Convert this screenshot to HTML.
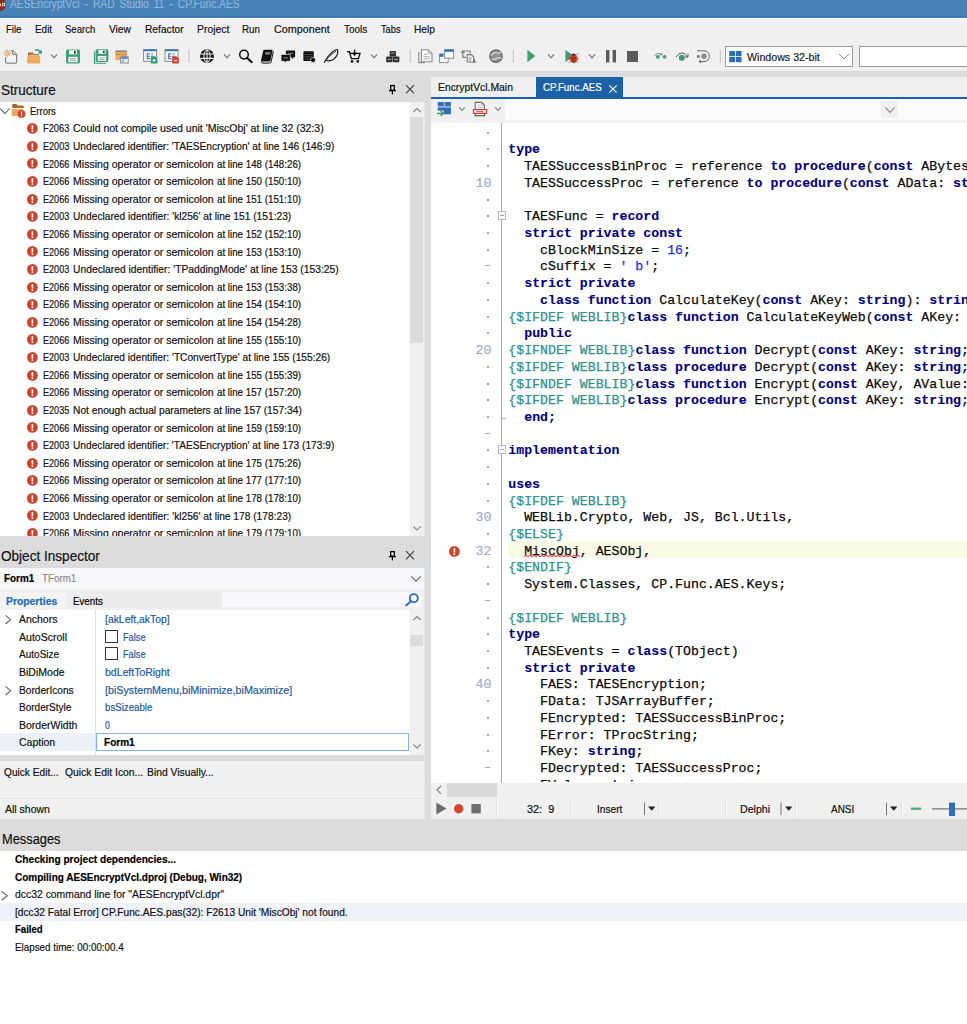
<!DOCTYPE html>
<html><head><meta charset="utf-8"><title>RAD Studio</title>
<style>
html,body{margin:0;padding:0;}
body{width:967px;height:1024px;overflow:hidden;position:relative;background:#dcdcdc;font-family:'Liberation Sans',sans-serif;}
.t{position:absolute;white-space:pre;line-height:20px;height:20px;-webkit-text-stroke:0.2px;}
.t b{-webkit-text-stroke:0.1px;}
svg{overflow:visible;display:block}
</style></head><body>
<div style="position:absolute;left:0px;top:0px;width:967px;height:17.8px;background:#4682b8;"></div>
<div style="position:absolute;left:0px;top:16.4px;width:967px;height:1.4px;background:#3c79b1;"></div>
<div class="t" style="left:10.3px;top:-6.33px;font-family:'Liberation Sans',sans-serif;font-size:12.2px;color:#8db4da;transform:scaleX(0.8403);transform-origin:0 0;word-spacing:2.6px;">AESEncryptVcl - RAD Studio 11 - CP.Func.AES</div>
<svg style="position:absolute;left:0px;top:0px;overflow:hidden" width="8" height="13" viewBox="0 0 8 13"><circle cx="-0.6" cy="4.6" r="6.6" fill="#8a2a1e"/><rect x="2.2" y="2.8" width="3" height="3.4" fill="#f4e8e4"/><rect x="3.1" y="3.7" width="1.2" height="1.6" fill="#8a2a1e"/><rect x="-1" y="3.6" width="2" height="2.6" fill="#e8d4d0"/></svg>
<div style="position:absolute;left:0px;top:17.8px;width:967px;height:52.9px;background:#f0f0f0;"></div>
<div style="position:absolute;left:0px;top:17.8px;width:967px;height:1.4px;background:#fcfcfc;"></div>
<div class="t" style="left:5.5px;top:19.38px;font-family:'Liberation Sans',sans-serif;font-size:11.6px;color:#111;transform:scaleX(0.8241);transform-origin:0 0;">File</div>
<div class="t" style="left:34.5px;top:19.38px;font-family:'Liberation Sans',sans-serif;font-size:11.6px;color:#111;transform:scaleX(0.8557);transform-origin:0 0;">Edit</div>
<div class="t" style="left:65.4px;top:19.38px;font-family:'Liberation Sans',sans-serif;font-size:11.6px;color:#111;transform:scaleX(0.8221);transform-origin:0 0;">Search</div>
<div class="t" style="left:108.9px;top:19.38px;font-family:'Liberation Sans',sans-serif;font-size:11.6px;color:#111;transform:scaleX(0.8787);transform-origin:0 0;">View</div>
<div class="t" style="left:144.6px;top:19.38px;font-family:'Liberation Sans',sans-serif;font-size:11.6px;color:#111;transform:scaleX(0.8807);transform-origin:0 0;">Refactor</div>
<div class="t" style="left:196.5px;top:19.38px;font-family:'Liberation Sans',sans-serif;font-size:11.6px;color:#111;transform:scaleX(0.8949);transform-origin:0 0;">Project</div>
<div class="t" style="left:242.4px;top:19.38px;font-family:'Liberation Sans',sans-serif;font-size:11.6px;color:#111;transform:scaleX(0.8458);transform-origin:0 0;">Run</div>
<div class="t" style="left:274.2px;top:19.38px;font-family:'Liberation Sans',sans-serif;font-size:11.6px;color:#111;transform:scaleX(0.9291);transform-origin:0 0;">Component</div>
<div class="t" style="left:343.7px;top:19.38px;font-family:'Liberation Sans',sans-serif;font-size:11.6px;color:#111;transform:scaleX(0.8605);transform-origin:0 0;">Tools</div>
<div class="t" style="left:380.8px;top:19.38px;font-family:'Liberation Sans',sans-serif;font-size:11.6px;color:#111;transform:scaleX(0.7959);transform-origin:0 0;">Tabs</div>
<div class="t" style="left:414.1px;top:19.38px;font-family:'Liberation Sans',sans-serif;font-size:11.6px;color:#111;transform:scaleX(0.876);transform-origin:0 0;">Help</div>
<svg style="position:absolute;left:0px;top:44px;" width="967" height="26" viewBox="0 44 967 26"><path d="M5.6 57 V62 q0 1.2 1.2 1.2 H15.4 q1.2 0 1.2 -1.2 V54.6 L12.8 50.6 H11" fill="#f6f6f6" stroke="#858585" stroke-width="1.2"/><path d="M12.6 50.8 V54.6 H16.4" fill="#d8d8d8" stroke="#858585" stroke-width="1"/><path d="M7.4 53.3 L11.30 53.30 M7.4 53.3 L10.16 56.06 M7.4 53.3 L7.40 57.20 M7.4 53.3 L4.64 56.06 M7.4 53.3 L3.50 53.30 M7.4 53.3 L4.64 50.54 M7.4 53.3 L7.40 49.40 M7.4 53.3 L10.16 50.54 " stroke="#f0a550" stroke-width="1.1" fill="none"/><circle cx="7.4" cy="53.3" r="1.6" fill="#f4b46a"/><circle cx="7.4" cy="53.3" r="0.6" fill="#fff"/><path d="M28 53.2 q0 -0.6 0.6 -0.6 H32.6 L34 54 H38 q0.6 0 0.6 0.6 V57 H28 Z" fill="#a9692e"/><rect x="27.2" y="56" width="13" height="7.4" rx="0.8" fill="#ebaa5c"/><rect x="28.6" y="54.8" width="9.6" height="1.2" fill="#d8c0a0"/><path d="M35 50 H38.4 L41 52.8 M41.2 50.2 V53 H38.4" fill="none" stroke="#2e9e78" stroke-width="1.3"/><path d="M51 54.4 l3.0 3.4 l3.0 -3.4" fill="none" stroke="#777" stroke-width="1.2"/><rect x="66" y="49.4" width="14" height="14" rx="1.6" fill="#3d9e78"/><rect x="69.0" y="50.199999999999996" width="8.0" height="4.2" fill="#eef5f1"/><rect x="74.0" y="51.0" width="1.8" height="2.6" fill="#3a3a3a"/><rect x="68.4" y="56.8" width="9.2" height="5.4" fill="#f4f7f5"/><rect x="70.0" y="58.4" width="6.0" height="0.9" fill="#9a9a9a"/><rect x="70.0" y="60.2" width="6.0" height="0.9" fill="#9a9a9a"/><path d="M94.4 51.5 V63.2 H106" fill="none" stroke="#3d9e78" stroke-width="1.1"/><rect x="95.6" y="49.2" width="12.8" height="12.8" rx="1.462857142857143" fill="#3d9e78"/><rect x="98.34285714285714" y="49.931428571428576" width="7.314285714285715" height="3.8400000000000003" fill="#eef5f1"/><rect x="102.91428571428571" y="50.66285714285715" width="1.645714285714286" height="2.3771428571428572" fill="#3a3a3a"/><rect x="97.7942857142857" y="55.96571428571429" width="8.411428571428571" height="4.937142857142858" fill="#f4f7f5"/><rect x="99.25714285714285" y="57.42857142857143" width="5.485714285714286" height="0.822857142857143" fill="#9a9a9a"/><rect x="99.25714285714285" y="59.07428571428572" width="5.485714285714286" height="0.822857142857143" fill="#9a9a9a"/><rect x="115.4" y="50.4" width="11.6" height="2.6" fill="#8a8a8a"/><rect x="115.4" y="52.2" width="11.6" height="8" fill="#ebaa5c"/><rect x="115.4" y="54" width="11.6" height="0.9" fill="#c98a45"/><rect x="120.6" y="56.6" width="7.6" height="6.4" fill="#f2f2f2" stroke="#8a8a8a" stroke-width="1"/><rect x="121.2" y="57.2" width="6.4" height="1.6" fill="#3b78c0"/><rect x="122" y="59.6" width="2.2" height="2.6" fill="#8ab0dc"/><rect x="143.6" y="49.8" width="13" height="11.6" fill="#fafafa" stroke="#8a8a8a" stroke-width="1"/><rect x="143.6" y="49.4" width="13" height="1.8" fill="#2f6fbe"/><path d="M146.79999999999998 53.8 H150.0 M146.79999999999998 56.2 H150.0 M146.79999999999998 58.6 H150.0 M147.2 53.8 V58.6" stroke="#3b78c0" stroke-width="1.1" fill="none"/><path d="M151.2 54 H153.2 M151.2 56.2 H153.2" stroke="#3b78c0" stroke-width="1" fill="none"/><path d="M150.79999999999998 56.2 H155.0 L157.4 58.4 V63.4 H150.79999999999998 Z" fill="#2e9e78"/><path d="M152.6 60.4 H155.6 M154.1 58.9 V61.9" stroke="#fff" stroke-width="1.2"/><rect x="165" y="49.8" width="13" height="11.6" fill="#fafafa" stroke="#8a8a8a" stroke-width="1"/><rect x="165" y="49.4" width="13" height="1.8" fill="#2f6fbe"/><path d="M168.2 53.8 H171.4 M168.2 56.2 H171.4 M168.2 58.6 H171.4 M168.6 53.8 V58.6" stroke="#3b78c0" stroke-width="1.1" fill="none"/><path d="M172.6 54 H174.6 M172.6 56.2 H174.6" stroke="#3b78c0" stroke-width="1" fill="none"/><path d="M172.2 56.2 H176.4 L178.8 58.4 V63.4 H172.2 Z" fill="#d0432c"/><path d="M174 60.6 H177" stroke="#fff" stroke-width="1.2"/><rect x="188.4" y="50.2" width="1.3" height="1.3" fill="#a6a6a6"/><rect x="188.4" y="52.800000000000004" width="1.3" height="1.3" fill="#a6a6a6"/><rect x="188.4" y="55.400000000000006" width="1.3" height="1.3" fill="#a6a6a6"/><rect x="188.4" y="58.0" width="1.3" height="1.3" fill="#a6a6a6"/><rect x="188.4" y="60.6" width="1.3" height="1.3" fill="#a6a6a6"/><circle cx="207" cy="56.2" r="6.9" fill="#111"/><ellipse cx="207" cy="56.2" rx="3.1" ry="6" fill="none" stroke="#f0f0f0" stroke-width="1.1"/><path d="M200.6 54 H213.4 M200.6 58.4 H213.4 M207 49.6 V62.8" stroke="#f0f0f0" stroke-width="1.1" fill="none"/><path d="M224 54.4 l3.0 3.4 l3.0 -3.4" fill="none" stroke="#777" stroke-width="1.2"/><circle cx="244" cy="54.6" r="4.3" fill="none" stroke="#111" stroke-width="1.5"/><path d="M247.2 58 L251.6 62" stroke="#111" stroke-width="2.3" stroke-linecap="round"/><path d="M264.4 49.8 H271.8 q1 0 0.8 1 L270.4 60.6 q-0.2 1 -1.2 1 H261.8 q-1 0 -0.8 -1 L263.2 50.8 q0.2 -1 1.2 -1 Z" fill="#111"/><path d="M261.2 61.8 q0.4 1.3 1.6 1.3 H269.8 q1 0 1.2 -1 L273.4 51.4" fill="none" stroke="#111" stroke-width="1"/><path d="M265.4 52.2 H270.6 L270.2 54.6 H265 Z" fill="#8c8c8c"/><path d="M286.6 50.4 H294.4 q0.7 0 0.7 0.7 V56.6 q0 0.7 -0.7 0.7 H293.2 V59 L291.2 57.4 H286.6 q-0.7 0 -0.7 -0.7 V51.1 q0 -0.7 0.7 -0.7 Z" fill="#111"/><path d="M281.8 54.4 H289.6 q0.7 0 0.7 0.7 V60.6 q0 0.7 -0.7 0.7 H286.2 L284.4 63.2 V61.3 H281.8 q-0.7 0 -0.7 -0.7 V55.1 q0 -0.7 0.7 -0.7 Z" fill="#111" stroke="#f0f0f0" stroke-width="0.7"/><path d="M283.2 57.9 H288 M288.6 53.4 H293.2" stroke="#9a9a9a" stroke-width="0.9"/><rect x="303.4" y="51.2" width="10.4" height="9.8" rx="0.8" fill="#111"/><path d="M304.6 54.6 H312.6 M304.6 56.8 H312.6 M304.6 59 H310" stroke="#666" stroke-width="0.7"/><circle cx="313" cy="60" r="2.5" fill="#111" stroke="#f0f0f0" stroke-width="0.6"/><path d="M324 62.8 C326 58.6 328.6 55 333 51.4 C335 50 337.2 49.4 337.6 49.8 C338.2 52 337.2 55.6 334.6 58.4 C332 60.8 328.6 61.2 326.2 60.4" fill="none" stroke="#111" stroke-width="1.1"/><path d="M326.4 60 C329 56.6 332 53.8 336 51.2" fill="none" stroke="#111" stroke-width="0.8"/><path d="M347 51.6 H349.4 L351.4 58.6 H358.4 L360 53.4 H350" fill="none" stroke="#111" stroke-width="1.4"/><path d="M354.6 49.6 V55 M352.6 52.8 L354.6 55 L356.6 52.8" fill="none" stroke="#111" stroke-width="1.3"/><circle cx="352" cy="61.4" r="1.3" fill="#111"/><circle cx="357.8" cy="61.4" r="1.3" fill="#111"/><path d="M371 54.4 l3.0 3.4 l3.0 -3.4" fill="none" stroke="#777" stroke-width="1.2"/><rect x="389.6" y="51" width="6.4" height="5.6" rx="0.6" fill="#333"/><rect x="386.2" y="56.4" width="6.4" height="5.8" rx="0.6" fill="#333"/><rect x="393" y="56.4" width="6.4" height="5.8" rx="0.6" fill="#333"/><path d="M391 53 H394.6 M387.6 59.4 H391.2 M394.4 59.4 H398" stroke="#aaa" stroke-width="1"/><rect x="409.7" y="50.2" width="1.3" height="1.3" fill="#a6a6a6"/><rect x="409.7" y="52.800000000000004" width="1.3" height="1.3" fill="#a6a6a6"/><rect x="409.7" y="55.400000000000006" width="1.3" height="1.3" fill="#a6a6a6"/><rect x="409.7" y="58.0" width="1.3" height="1.3" fill="#a6a6a6"/><rect x="409.7" y="60.6" width="1.3" height="1.3" fill="#a6a6a6"/><path d="M418.8 52 V62.6 H425" fill="none" stroke="#8a8a8a" stroke-width="1.1"/><path d="M421.4 49.8 H428.4 L432 53.4 V61.8 H421.4 Z" fill="#f8f8f8" stroke="#8a8a8a" stroke-width="1.1"/><path d="M428.2 50 V53.6 H431.8 M423.6 54.4 H427 M423.6 56.6 H429.8 M423.6 58.8 H429.8" fill="none" stroke="#a8a8a8" stroke-width="0.9"/><rect x="439.6" y="54" width="8.6" height="8.6" fill="#fafafa" stroke="#8a8a8a" stroke-width="1"/><rect x="439.6" y="54" width="3.8" height="2.8" fill="#2f6fbe"/><rect x="444.6" y="49.8" width="9" height="8.4" fill="#fdfdfd" stroke="#8a8a8a" stroke-width="1"/><rect x="444.6" y="49.4" width="9" height="2.4" fill="#2f6fbe"/><path d="M462.8 57.4 V51.8 q0 -0.8 0.8 -0.8 H469.4 q0.8 0 0.8 0.8 V53.4" fill="none" stroke="#777" stroke-width="1.2"/><path d="M461 53 L462.8 50.8 L464.6 53" fill="none" stroke="#777" stroke-width="1.1"/><path d="M462.8 57.4 H466" fill="none" stroke="#777" stroke-width="1.2"/><path d="M467.2 54.6 H471.4 L473.6 56.8 V62 H467.2 Z" fill="#f4f4f4" stroke="#777" stroke-width="1.1"/><path d="M468.8 58 H471.6 M468.8 60 H471 M474.6 59 V62.6 M473 61.2 L474.6 63 L476 61.2" fill="none" stroke="#777" stroke-width="0.9"/><circle cx="496" cy="56.2" r="6.3" fill="#8f8f8f" stroke="#666" stroke-width="1.2"/><path d="M491 55.6 q3 -4 6 -2.6 q2.4 1 4.6 -1.6 M491.6 59 q3 0.8 5 -0.6 q2.6 -1.6 4.8 0.2" fill="none" stroke="#ddd" stroke-width="1.2"/><rect x="512.6999999999999" y="50.2" width="1.3" height="1.3" fill="#a6a6a6"/><rect x="512.6999999999999" y="52.800000000000004" width="1.3" height="1.3" fill="#a6a6a6"/><rect x="512.6999999999999" y="55.400000000000006" width="1.3" height="1.3" fill="#a6a6a6"/><rect x="512.6999999999999" y="58.0" width="1.3" height="1.3" fill="#a6a6a6"/><rect x="512.6999999999999" y="60.6" width="1.3" height="1.3" fill="#a6a6a6"/><path d="M527.4 49.8 L535.4 56 L527.4 62.2 Z" fill="#3d9e78"/><path d="M548 54.4 l3.0 3.4 l3.0 -3.4" fill="none" stroke="#777" stroke-width="1.2"/><path d="M565.4 49.8 L573.4 56 L565.4 62.2 Z" fill="#3d9e78"/><path d="M570.4 54.6 L569.2 53.4 M576.8 54.6 L578 53.4 M569.4 58.8 H568.4 M577.8 58.8 H578.8 M570 61.6 L569 62.6 M577.2 61.6 L578.2 62.6" stroke="#222" stroke-width="0.8"/><ellipse cx="573.6" cy="58.6" rx="4" ry="4.3" fill="#d9432b"/><path d="M571 55.2 q2.6 -3.4 5.2 0 Z" fill="#222"/><path d="M573.6 55 V62.8" stroke="#7a1f12" stroke-width="0.6"/><circle cx="572" cy="58.2" r="0.8" fill="#222"/><circle cx="575.2" cy="58.2" r="0.8" fill="#222"/><circle cx="572.2" cy="60.8" r="0.6" fill="#222"/><circle cx="575" cy="60.8" r="0.6" fill="#222"/><path d="M589 54.4 l3.0 3.4 l3.0 -3.4" fill="none" stroke="#777" stroke-width="1.2"/><rect x="606" y="50" width="3.4" height="12.4" fill="#5a5a5a"/><rect x="612.6" y="50" width="3.4" height="12.4" fill="#5a5a5a"/><rect x="627" y="51" width="11" height="11" fill="#5a5a5a"/><circle cx="657.8" cy="56.8" r="1.9" fill="#3d9e78"/><circle cx="664.6" cy="56.8" r="1.9" fill="#3d9e78"/><path d="M654.4 56 Q657.6 51.6 661.6 54.6 M661.8 52.8 V55 H659.6" fill="none" stroke="#777" stroke-width="0.9"/><circle cx="681.8" cy="57.8" r="3" fill="#3d9e78"/><path d="M676 57 Q681.8 49 687.6 56.6 M688 54 V57 H685" fill="none" stroke="#555" stroke-width="1"/><circle cx="698.4" cy="56.4" r="1.7" fill="#8a8a8a"/><circle cx="704" cy="56.2" r="2.7" fill="#8a8a8a"/><path d="M697 50.8 H704 A5.4 5.4 0 0 1 704 61.6 H699.4 M701 60 L699 61.6 L701 63.2" fill="none" stroke="#555" stroke-width="0.9"/><rect x="719.6999999999999" y="50.2" width="1.3" height="1.3" fill="#a6a6a6"/><rect x="719.6999999999999" y="52.800000000000004" width="1.3" height="1.3" fill="#a6a6a6"/><rect x="719.6999999999999" y="55.400000000000006" width="1.3" height="1.3" fill="#a6a6a6"/><rect x="719.6999999999999" y="58.0" width="1.3" height="1.3" fill="#a6a6a6"/><rect x="719.6999999999999" y="60.6" width="1.3" height="1.3" fill="#a6a6a6"/></svg>
<div style="position:absolute;left:724.5px;top:46px;width:128px;height:20.8px;background:#fff;border:1px solid #9c9c9c;box-sizing:border-box"></div>
<svg style="position:absolute;left:0px;top:44px;" width="967" height="26" viewBox="0 44 967 26"><rect x="729.2" y="51" width="5.8" height="5.2" fill="#2f6eb5"/><rect x="735.8" y="51" width="5.8" height="5.2" fill="#2f6eb5"/><rect x="729.2" y="57" width="5.8" height="5.2" fill="#2f6eb5"/><rect x="735.8" y="57" width="5.8" height="5.2" fill="#2f6eb5"/><path d="M839 54 L844 59 L849 54" fill="none" stroke="#8a8a8a" stroke-width="1"/></svg>
<div class="t" style="left:746.6px;top:46.58px;font-family:'Liberation Sans',sans-serif;font-size:11.6px;color:#1a1a1a;transform:scaleX(0.9184);transform-origin:0 0;">Windows 32-bit</div>
<div style="position:absolute;left:859.4px;top:46px;width:120px;height:20.8px;background:#fff;border:1px solid #9c9c9c;box-sizing:border-box"></div>
<div class="t" style="left:1.2px;top:80.15px;font-family:'Liberation Sans',sans-serif;font-size:14px;color:#111;transform:scaleX(0.9628);transform-origin:0 0;">Structure</div>
<div style="position:absolute;left:0px;top:102px;width:409.6px;height:434.3px;background:#fff;"></div>
<div style="position:absolute;left:409.6px;top:102px;width:14.7px;height:434.3px;background:#f0f0f0;"></div>
<div style="position:absolute;left:410.2px;top:117px;width:12.7px;height:226px;background:#dcdcdc;"></div>
<div style="position:absolute;left:424.3px;top:102px;width:0.7px;height:434.3px;background:#e8e8e8;"></div>
<div style="position:absolute;left:424.3px;top:568px;width:0.7px;height:250.7px;background:#e8e8e8;"></div>
<svg style="position:absolute;left:0px;top:83.2px;" width="430" height="14" viewBox="0 83.2 430 14"><rect x="390.7" y="85.8" width="3.6" height="4.6" fill="#e8e8e8" stroke="#000" stroke-width="1.3"/><rect x="388.9" y="90.2" width="7" height="1.3" fill="#000"/><rect x="391.8" y="91.2" width="1.2" height="3.4" fill="#000"/><path d="M406 85.4 L414 93.60000000000001 M414 85.4 L406 93.60000000000001" stroke="#3a3a3a" stroke-width="1.1" fill="none"/></svg>
<svg style="position:absolute;left:413px;top:107.6px;" width="8" height="4.4" viewBox="0 0 8 4.4"><path d="M0.3 4 L4 0.5 L7.7 4" fill="none" stroke="#888" stroke-width="1.2"/></svg>
<svg style="position:absolute;left:413px;top:526.4px;" width="8" height="4.4" viewBox="0 0 8 4.4"><path d="M0.3 0.4 L4 3.9 L7.7 0.4" fill="none" stroke="#888" stroke-width="1.2"/></svg>
<div class="t" style="left:29.5px;top:100.68px;font-family:'Liberation Sans',sans-serif;font-size:11.3px;color:#111;transform:scaleX(0.8386);transform-origin:0 0;">Errors</div>
<svg style="position:absolute;left:0px;top:102px;" width="30" height="18" viewBox="0 102 30 18"><path d="M0.3 108.5 L4.9 113.6 L9.5 108.5" fill="none" stroke="#666" stroke-width="1.1"/><path d="M12.2 104.6 q0 -0.6 0.6 -0.6 H16.4 L17.8 105.6 H23.2 q0.6 0 0.6 0.6 V107.9 H12.2 Z" fill="#a9692e"/><rect x="11.6" y="108.9" width="11" height="7" rx="0.6" fill="#ebaa5c"/><circle cx="21.5" cy="113.9" r="3.9" fill="#d0432c"/><rect x="20.9" y="111.4" width="1.2" height="3.2" fill="#fff"/><rect x="20.9" y="115.4" width="1.2" height="1.1" fill="#fff"/></svg>
<div style="position:absolute;left:0;top:102px;width:410px;height:434.3px;overflow:hidden">
<div class="t" style="left:43.1px;top:16.48px;font-family:'Liberation Sans',sans-serif;font-size:11.3px;color:#111;transform:scaleX(0.8207);transform-origin:0 0;">F2063</div>
<div class="t" style="left:72.7px;top:16.48px;font-family:'Liberation Sans',sans-serif;font-size:11.3px;color:#111;transform:scaleX(0.9309);transform-origin:0 0;">Could not compile used unit 'MiscObj' at line 32 (32:3)</div>
<svg style="position:absolute;left:27.2px;top:21.10000000000001px;" width="10.8" height="10.8" viewBox="0 0 10.8 10.8"><circle cx="5.4" cy="5.4" r="5.4" fill="#c9452f"/><rect x="4.6" y="2.2" width="1.6" height="4.3" fill="#fff"/><rect x="4.6" y="7.4" width="1.6" height="1.5" fill="#fff"/></svg>
<div class="t" style="left:43.1px;top:34.08px;font-family:'Liberation Sans',sans-serif;font-size:11.3px;color:#111;transform:scaleX(0.805);transform-origin:0 0;">E2003</div>
<div class="t" style="left:72.7px;top:34.08px;font-family:'Liberation Sans',sans-serif;font-size:11.3px;color:#111;transform:scaleX(0.8996);transform-origin:0 0;">Undeclared identifier: 'TAESEncryption' at line 146 (146:9)</div>
<svg style="position:absolute;left:27.2px;top:38.7px;" width="10.8" height="10.8" viewBox="0 0 10.8 10.8"><circle cx="5.4" cy="5.4" r="5.4" fill="#c9452f"/><rect x="4.6" y="2.2" width="1.6" height="4.3" fill="#fff"/><rect x="4.6" y="7.4" width="1.6" height="1.5" fill="#fff"/></svg>
<div class="t" style="left:43.1px;top:51.68px;font-family:'Liberation Sans',sans-serif;font-size:11.3px;color:#111;transform:scaleX(0.805);transform-origin:0 0;">E2066</div>
<div class="t" style="left:72.7px;top:51.68px;font-family:'Liberation Sans',sans-serif;font-size:11.3px;color:#111;transform:scaleX(0.9336);transform-origin:0 0;">Missing operator or semicolon</div>
<div class="t" style="left:217.4px;top:51.68px;font-family:'Liberation Sans',sans-serif;font-size:11.3px;color:#111;transform:scaleX(0.8638);transform-origin:0 0;">at line 148 (148:26)</div>
<svg style="position:absolute;left:27.2px;top:56.300000000000026px;" width="10.8" height="10.8" viewBox="0 0 10.8 10.8"><circle cx="5.4" cy="5.4" r="5.4" fill="#c9452f"/><rect x="4.6" y="2.2" width="1.6" height="4.3" fill="#fff"/><rect x="4.6" y="7.4" width="1.6" height="1.5" fill="#fff"/></svg>
<div class="t" style="left:43.1px;top:69.28px;font-family:'Liberation Sans',sans-serif;font-size:11.3px;color:#111;transform:scaleX(0.805);transform-origin:0 0;">E2066</div>
<div class="t" style="left:72.7px;top:69.28px;font-family:'Liberation Sans',sans-serif;font-size:11.3px;color:#111;transform:scaleX(0.9336);transform-origin:0 0;">Missing operator or semicolon</div>
<div class="t" style="left:217.4px;top:69.28px;font-family:'Liberation Sans',sans-serif;font-size:11.3px;color:#111;transform:scaleX(0.8638);transform-origin:0 0;">at line 150 (150:10)</div>
<svg style="position:absolute;left:27.2px;top:73.9px;" width="10.8" height="10.8" viewBox="0 0 10.8 10.8"><circle cx="5.4" cy="5.4" r="5.4" fill="#c9452f"/><rect x="4.6" y="2.2" width="1.6" height="4.3" fill="#fff"/><rect x="4.6" y="7.4" width="1.6" height="1.5" fill="#fff"/></svg>
<div class="t" style="left:43.1px;top:86.88px;font-family:'Liberation Sans',sans-serif;font-size:11.3px;color:#111;transform:scaleX(0.805);transform-origin:0 0;">E2066</div>
<div class="t" style="left:72.7px;top:86.88px;font-family:'Liberation Sans',sans-serif;font-size:11.3px;color:#111;transform:scaleX(0.9336);transform-origin:0 0;">Missing operator or semicolon</div>
<div class="t" style="left:217.4px;top:86.88px;font-family:'Liberation Sans',sans-serif;font-size:11.3px;color:#111;transform:scaleX(0.8638);transform-origin:0 0;">at line 151 (151:10)</div>
<svg style="position:absolute;left:27.2px;top:91.5px;" width="10.8" height="10.8" viewBox="0 0 10.8 10.8"><circle cx="5.4" cy="5.4" r="5.4" fill="#c9452f"/><rect x="4.6" y="2.2" width="1.6" height="4.3" fill="#fff"/><rect x="4.6" y="7.4" width="1.6" height="1.5" fill="#fff"/></svg>
<div class="t" style="left:43.1px;top:104.48px;font-family:'Liberation Sans',sans-serif;font-size:11.3px;color:#111;transform:scaleX(0.805);transform-origin:0 0;">E2003</div>
<div class="t" style="left:72.7px;top:104.48px;font-family:'Liberation Sans',sans-serif;font-size:11.3px;color:#111;transform:scaleX(0.9028);transform-origin:0 0;">Undeclared identifier: 'kl256' at line 151 (151:23)</div>
<svg style="position:absolute;left:27.2px;top:109.1px;" width="10.8" height="10.8" viewBox="0 0 10.8 10.8"><circle cx="5.4" cy="5.4" r="5.4" fill="#c9452f"/><rect x="4.6" y="2.2" width="1.6" height="4.3" fill="#fff"/><rect x="4.6" y="7.4" width="1.6" height="1.5" fill="#fff"/></svg>
<div class="t" style="left:43.1px;top:122.08px;font-family:'Liberation Sans',sans-serif;font-size:11.3px;color:#111;transform:scaleX(0.805);transform-origin:0 0;">E2066</div>
<div class="t" style="left:72.7px;top:122.08px;font-family:'Liberation Sans',sans-serif;font-size:11.3px;color:#111;transform:scaleX(0.9336);transform-origin:0 0;">Missing operator or semicolon</div>
<div class="t" style="left:217.4px;top:122.08px;font-family:'Liberation Sans',sans-serif;font-size:11.3px;color:#111;transform:scaleX(0.8638);transform-origin:0 0;">at line 152 (152:10)</div>
<svg style="position:absolute;left:27.2px;top:126.69999999999999px;" width="10.8" height="10.8" viewBox="0 0 10.8 10.8"><circle cx="5.4" cy="5.4" r="5.4" fill="#c9452f"/><rect x="4.6" y="2.2" width="1.6" height="4.3" fill="#fff"/><rect x="4.6" y="7.4" width="1.6" height="1.5" fill="#fff"/></svg>
<div class="t" style="left:43.1px;top:139.68px;font-family:'Liberation Sans',sans-serif;font-size:11.3px;color:#111;transform:scaleX(0.805);transform-origin:0 0;">E2066</div>
<div class="t" style="left:72.7px;top:139.68px;font-family:'Liberation Sans',sans-serif;font-size:11.3px;color:#111;transform:scaleX(0.9336);transform-origin:0 0;">Missing operator or semicolon</div>
<div class="t" style="left:217.4px;top:139.68px;font-family:'Liberation Sans',sans-serif;font-size:11.3px;color:#111;transform:scaleX(0.8638);transform-origin:0 0;">at line 153 (153:10)</div>
<svg style="position:absolute;left:27.2px;top:144.3px;" width="10.8" height="10.8" viewBox="0 0 10.8 10.8"><circle cx="5.4" cy="5.4" r="5.4" fill="#c9452f"/><rect x="4.6" y="2.2" width="1.6" height="4.3" fill="#fff"/><rect x="4.6" y="7.4" width="1.6" height="1.5" fill="#fff"/></svg>
<div class="t" style="left:43.1px;top:157.28px;font-family:'Liberation Sans',sans-serif;font-size:11.3px;color:#111;transform:scaleX(0.805);transform-origin:0 0;">E2003</div>
<div class="t" style="left:72.7px;top:157.28px;font-family:'Liberation Sans',sans-serif;font-size:11.3px;color:#111;transform:scaleX(0.9121);transform-origin:0 0;">Undeclared identifier: 'TPaddingMode' at line 153 (153:25)</div>
<svg style="position:absolute;left:27.2px;top:161.90000000000003px;" width="10.8" height="10.8" viewBox="0 0 10.8 10.8"><circle cx="5.4" cy="5.4" r="5.4" fill="#c9452f"/><rect x="4.6" y="2.2" width="1.6" height="4.3" fill="#fff"/><rect x="4.6" y="7.4" width="1.6" height="1.5" fill="#fff"/></svg>
<div class="t" style="left:43.1px;top:174.88px;font-family:'Liberation Sans',sans-serif;font-size:11.3px;color:#111;transform:scaleX(0.805);transform-origin:0 0;">E2066</div>
<div class="t" style="left:72.7px;top:174.88px;font-family:'Liberation Sans',sans-serif;font-size:11.3px;color:#111;transform:scaleX(0.9336);transform-origin:0 0;">Missing operator or semicolon</div>
<div class="t" style="left:217.4px;top:174.88px;font-family:'Liberation Sans',sans-serif;font-size:11.3px;color:#111;transform:scaleX(0.8638);transform-origin:0 0;">at line 153 (153:38)</div>
<svg style="position:absolute;left:27.2px;top:179.5px;" width="10.8" height="10.8" viewBox="0 0 10.8 10.8"><circle cx="5.4" cy="5.4" r="5.4" fill="#c9452f"/><rect x="4.6" y="2.2" width="1.6" height="4.3" fill="#fff"/><rect x="4.6" y="7.4" width="1.6" height="1.5" fill="#fff"/></svg>
<div class="t" style="left:43.1px;top:192.48px;font-family:'Liberation Sans',sans-serif;font-size:11.3px;color:#111;transform:scaleX(0.805);transform-origin:0 0;">E2066</div>
<div class="t" style="left:72.7px;top:192.48px;font-family:'Liberation Sans',sans-serif;font-size:11.3px;color:#111;transform:scaleX(0.9336);transform-origin:0 0;">Missing operator or semicolon</div>
<div class="t" style="left:217.4px;top:192.48px;font-family:'Liberation Sans',sans-serif;font-size:11.3px;color:#111;transform:scaleX(0.8638);transform-origin:0 0;">at line 154 (154:10)</div>
<svg style="position:absolute;left:27.2px;top:197.09999999999997px;" width="10.8" height="10.8" viewBox="0 0 10.8 10.8"><circle cx="5.4" cy="5.4" r="5.4" fill="#c9452f"/><rect x="4.6" y="2.2" width="1.6" height="4.3" fill="#fff"/><rect x="4.6" y="7.4" width="1.6" height="1.5" fill="#fff"/></svg>
<div class="t" style="left:43.1px;top:210.08px;font-family:'Liberation Sans',sans-serif;font-size:11.3px;color:#111;transform:scaleX(0.805);transform-origin:0 0;">E2066</div>
<div class="t" style="left:72.7px;top:210.08px;font-family:'Liberation Sans',sans-serif;font-size:11.3px;color:#111;transform:scaleX(0.9336);transform-origin:0 0;">Missing operator or semicolon</div>
<div class="t" style="left:217.4px;top:210.08px;font-family:'Liberation Sans',sans-serif;font-size:11.3px;color:#111;transform:scaleX(0.8638);transform-origin:0 0;">at line 154 (154:28)</div>
<svg style="position:absolute;left:27.2px;top:214.7px;" width="10.8" height="10.8" viewBox="0 0 10.8 10.8"><circle cx="5.4" cy="5.4" r="5.4" fill="#c9452f"/><rect x="4.6" y="2.2" width="1.6" height="4.3" fill="#fff"/><rect x="4.6" y="7.4" width="1.6" height="1.5" fill="#fff"/></svg>
<div class="t" style="left:43.1px;top:227.68px;font-family:'Liberation Sans',sans-serif;font-size:11.3px;color:#111;transform:scaleX(0.805);transform-origin:0 0;">E2066</div>
<div class="t" style="left:72.7px;top:227.68px;font-family:'Liberation Sans',sans-serif;font-size:11.3px;color:#111;transform:scaleX(0.9336);transform-origin:0 0;">Missing operator or semicolon</div>
<div class="t" style="left:217.4px;top:227.68px;font-family:'Liberation Sans',sans-serif;font-size:11.3px;color:#111;transform:scaleX(0.8638);transform-origin:0 0;">at line 155 (155:10)</div>
<svg style="position:absolute;left:27.2px;top:232.3px;" width="10.8" height="10.8" viewBox="0 0 10.8 10.8"><circle cx="5.4" cy="5.4" r="5.4" fill="#c9452f"/><rect x="4.6" y="2.2" width="1.6" height="4.3" fill="#fff"/><rect x="4.6" y="7.4" width="1.6" height="1.5" fill="#fff"/></svg>
<div class="t" style="left:43.1px;top:245.28px;font-family:'Liberation Sans',sans-serif;font-size:11.3px;color:#111;transform:scaleX(0.805);transform-origin:0 0;">E2003</div>
<div class="t" style="left:72.7px;top:245.28px;font-family:'Liberation Sans',sans-serif;font-size:11.3px;color:#111;transform:scaleX(0.9004);transform-origin:0 0;">Undeclared identifier: 'TConvertType' at line 155 (155:26)</div>
<svg style="position:absolute;left:27.2px;top:249.90000000000003px;" width="10.8" height="10.8" viewBox="0 0 10.8 10.8"><circle cx="5.4" cy="5.4" r="5.4" fill="#c9452f"/><rect x="4.6" y="2.2" width="1.6" height="4.3" fill="#fff"/><rect x="4.6" y="7.4" width="1.6" height="1.5" fill="#fff"/></svg>
<div class="t" style="left:43.1px;top:262.88px;font-family:'Liberation Sans',sans-serif;font-size:11.3px;color:#111;transform:scaleX(0.805);transform-origin:0 0;">E2066</div>
<div class="t" style="left:72.7px;top:262.88px;font-family:'Liberation Sans',sans-serif;font-size:11.3px;color:#111;transform:scaleX(0.9336);transform-origin:0 0;">Missing operator or semicolon</div>
<div class="t" style="left:217.4px;top:262.88px;font-family:'Liberation Sans',sans-serif;font-size:11.3px;color:#111;transform:scaleX(0.8638);transform-origin:0 0;">at line 155 (155:39)</div>
<svg style="position:absolute;left:27.2px;top:267.5000000000001px;" width="10.8" height="10.8" viewBox="0 0 10.8 10.8"><circle cx="5.4" cy="5.4" r="5.4" fill="#c9452f"/><rect x="4.6" y="2.2" width="1.6" height="4.3" fill="#fff"/><rect x="4.6" y="7.4" width="1.6" height="1.5" fill="#fff"/></svg>
<div class="t" style="left:43.1px;top:280.48px;font-family:'Liberation Sans',sans-serif;font-size:11.3px;color:#111;transform:scaleX(0.805);transform-origin:0 0;">E2066</div>
<div class="t" style="left:72.7px;top:280.48px;font-family:'Liberation Sans',sans-serif;font-size:11.3px;color:#111;transform:scaleX(0.9336);transform-origin:0 0;">Missing operator or semicolon</div>
<div class="t" style="left:217.4px;top:280.48px;font-family:'Liberation Sans',sans-serif;font-size:11.3px;color:#111;transform:scaleX(0.8638);transform-origin:0 0;">at line 157 (157:20)</div>
<svg style="position:absolute;left:27.2px;top:285.1px;" width="10.8" height="10.8" viewBox="0 0 10.8 10.8"><circle cx="5.4" cy="5.4" r="5.4" fill="#c9452f"/><rect x="4.6" y="2.2" width="1.6" height="4.3" fill="#fff"/><rect x="4.6" y="7.4" width="1.6" height="1.5" fill="#fff"/></svg>
<div class="t" style="left:43.1px;top:298.08px;font-family:'Liberation Sans',sans-serif;font-size:11.3px;color:#111;transform:scaleX(0.805);transform-origin:0 0;">E2035</div>
<div class="t" style="left:72.7px;top:298.08px;font-family:'Liberation Sans',sans-serif;font-size:11.3px;color:#111;transform:scaleX(0.9063);transform-origin:0 0;">Not enough actual parameters at line 157 (157:34)</div>
<svg style="position:absolute;left:27.2px;top:302.70000000000005px;" width="10.8" height="10.8" viewBox="0 0 10.8 10.8"><circle cx="5.4" cy="5.4" r="5.4" fill="#c9452f"/><rect x="4.6" y="2.2" width="1.6" height="4.3" fill="#fff"/><rect x="4.6" y="7.4" width="1.6" height="1.5" fill="#fff"/></svg>
<div class="t" style="left:43.1px;top:315.68px;font-family:'Liberation Sans',sans-serif;font-size:11.3px;color:#111;transform:scaleX(0.805);transform-origin:0 0;">E2066</div>
<div class="t" style="left:72.7px;top:315.68px;font-family:'Liberation Sans',sans-serif;font-size:11.3px;color:#111;transform:scaleX(0.9336);transform-origin:0 0;">Missing operator or semicolon</div>
<div class="t" style="left:217.4px;top:315.68px;font-family:'Liberation Sans',sans-serif;font-size:11.3px;color:#111;transform:scaleX(0.8638);transform-origin:0 0;">at line 159 (159:10)</div>
<svg style="position:absolute;left:27.2px;top:320.30000000000007px;" width="10.8" height="10.8" viewBox="0 0 10.8 10.8"><circle cx="5.4" cy="5.4" r="5.4" fill="#c9452f"/><rect x="4.6" y="2.2" width="1.6" height="4.3" fill="#fff"/><rect x="4.6" y="7.4" width="1.6" height="1.5" fill="#fff"/></svg>
<div class="t" style="left:43.1px;top:333.28px;font-family:'Liberation Sans',sans-serif;font-size:11.3px;color:#111;transform:scaleX(0.805);transform-origin:0 0;">E2003</div>
<div class="t" style="left:72.7px;top:333.28px;font-family:'Liberation Sans',sans-serif;font-size:11.3px;color:#111;transform:scaleX(0.8996);transform-origin:0 0;">Undeclared identifier: 'TAESEncryption' at line 173 (173:9)</div>
<svg style="position:absolute;left:27.2px;top:337.9000000000001px;" width="10.8" height="10.8" viewBox="0 0 10.8 10.8"><circle cx="5.4" cy="5.4" r="5.4" fill="#c9452f"/><rect x="4.6" y="2.2" width="1.6" height="4.3" fill="#fff"/><rect x="4.6" y="7.4" width="1.6" height="1.5" fill="#fff"/></svg>
<div class="t" style="left:43.1px;top:350.88px;font-family:'Liberation Sans',sans-serif;font-size:11.3px;color:#111;transform:scaleX(0.805);transform-origin:0 0;">E2066</div>
<div class="t" style="left:72.7px;top:350.88px;font-family:'Liberation Sans',sans-serif;font-size:11.3px;color:#111;transform:scaleX(0.9336);transform-origin:0 0;">Missing operator or semicolon</div>
<div class="t" style="left:217.4px;top:350.88px;font-family:'Liberation Sans',sans-serif;font-size:11.3px;color:#111;transform:scaleX(0.8638);transform-origin:0 0;">at line 175 (175:26)</div>
<svg style="position:absolute;left:27.2px;top:355.5000000000001px;" width="10.8" height="10.8" viewBox="0 0 10.8 10.8"><circle cx="5.4" cy="5.4" r="5.4" fill="#c9452f"/><rect x="4.6" y="2.2" width="1.6" height="4.3" fill="#fff"/><rect x="4.6" y="7.4" width="1.6" height="1.5" fill="#fff"/></svg>
<div class="t" style="left:43.1px;top:368.48px;font-family:'Liberation Sans',sans-serif;font-size:11.3px;color:#111;transform:scaleX(0.805);transform-origin:0 0;">E2066</div>
<div class="t" style="left:72.7px;top:368.48px;font-family:'Liberation Sans',sans-serif;font-size:11.3px;color:#111;transform:scaleX(0.9336);transform-origin:0 0;">Missing operator or semicolon</div>
<div class="t" style="left:217.4px;top:368.48px;font-family:'Liberation Sans',sans-serif;font-size:11.3px;color:#111;transform:scaleX(0.8638);transform-origin:0 0;">at line 177 (177:10)</div>
<svg style="position:absolute;left:27.2px;top:373.1px;" width="10.8" height="10.8" viewBox="0 0 10.8 10.8"><circle cx="5.4" cy="5.4" r="5.4" fill="#c9452f"/><rect x="4.6" y="2.2" width="1.6" height="4.3" fill="#fff"/><rect x="4.6" y="7.4" width="1.6" height="1.5" fill="#fff"/></svg>
<div class="t" style="left:43.1px;top:386.08px;font-family:'Liberation Sans',sans-serif;font-size:11.3px;color:#111;transform:scaleX(0.805);transform-origin:0 0;">E2066</div>
<div class="t" style="left:72.7px;top:386.08px;font-family:'Liberation Sans',sans-serif;font-size:11.3px;color:#111;transform:scaleX(0.9336);transform-origin:0 0;">Missing operator or semicolon</div>
<div class="t" style="left:217.4px;top:386.08px;font-family:'Liberation Sans',sans-serif;font-size:11.3px;color:#111;transform:scaleX(0.8638);transform-origin:0 0;">at line 178 (178:10)</div>
<svg style="position:absolute;left:27.2px;top:390.70000000000005px;" width="10.8" height="10.8" viewBox="0 0 10.8 10.8"><circle cx="5.4" cy="5.4" r="5.4" fill="#c9452f"/><rect x="4.6" y="2.2" width="1.6" height="4.3" fill="#fff"/><rect x="4.6" y="7.4" width="1.6" height="1.5" fill="#fff"/></svg>
<div class="t" style="left:43.1px;top:403.68px;font-family:'Liberation Sans',sans-serif;font-size:11.3px;color:#111;transform:scaleX(0.805);transform-origin:0 0;">E2003</div>
<div class="t" style="left:72.7px;top:403.68px;font-family:'Liberation Sans',sans-serif;font-size:11.3px;color:#111;transform:scaleX(0.9028);transform-origin:0 0;">Undeclared identifier: 'kl256' at line 178 (178:23)</div>
<svg style="position:absolute;left:27.2px;top:408.30000000000007px;" width="10.8" height="10.8" viewBox="0 0 10.8 10.8"><circle cx="5.4" cy="5.4" r="5.4" fill="#c9452f"/><rect x="4.6" y="2.2" width="1.6" height="4.3" fill="#fff"/><rect x="4.6" y="7.4" width="1.6" height="1.5" fill="#fff"/></svg>
<div class="t" style="left:43.1px;top:421.28px;font-family:'Liberation Sans',sans-serif;font-size:11.3px;color:#111;transform:scaleX(0.805);transform-origin:0 0;">E2066</div>
<div class="t" style="left:72.7px;top:421.28px;font-family:'Liberation Sans',sans-serif;font-size:11.3px;color:#111;transform:scaleX(0.9336);transform-origin:0 0;">Missing operator or semicolon</div>
<div class="t" style="left:217.4px;top:421.28px;font-family:'Liberation Sans',sans-serif;font-size:11.3px;color:#111;transform:scaleX(0.8638);transform-origin:0 0;">at line 179 (179:10)</div>
<svg style="position:absolute;left:27.2px;top:425.9000000000001px;" width="10.8" height="10.8" viewBox="0 0 10.8 10.8"><circle cx="5.4" cy="5.4" r="5.4" fill="#c9452f"/><rect x="4.6" y="2.2" width="1.6" height="4.3" fill="#fff"/><rect x="4.6" y="7.4" width="1.6" height="1.5" fill="#fff"/></svg>
</div>
<div class="t" style="left:1.2px;top:545.75px;font-family:'Liberation Sans',sans-serif;font-size:14px;color:#111;transform:scaleX(0.9692);transform-origin:0 0;">Object Inspector</div>
<div style="position:absolute;left:0px;top:568px;width:424.3px;height:20.5px;background:#f7f8fc;"></div>
<div style="position:absolute;left:0px;top:588.5px;width:424.3px;height:21px;background:#f0f0f0;"></div>
<div class="t" style="left:4.4px;top:567.98px;font-family:'Liberation Sans',sans-serif;font-size:11.3px;color:#000;font-weight:bold;transform:scaleX(0.8775);transform-origin:0 0;">Form1</div>
<div class="t" style="left:42.2px;top:567.98px;font-family:'Liberation Sans',sans-serif;font-size:11.3px;color:#8a8a8a;transform:scaleX(0.8673);transform-origin:0 0;">TForm1</div>
<div style="position:absolute;left:0px;top:592.4px;width:67px;height:17.1px;background:#f4f4f4;"></div>
<div style="position:absolute;left:67px;top:592.4px;width:155px;height:15.5px;background:#ececec;"></div>
<div style="position:absolute;left:222px;top:592.4px;width:199px;height:14.2px;background:#f8f8fc;"></div>
<div class="t" style="left:6.2px;top:590.68px;font-family:'Liberation Sans',sans-serif;font-size:11.3px;color:#1c6ab8;font-weight:bold;transform:scaleX(0.9161);transform-origin:0 0;">Properties</div>
<div class="t" style="left:73.4px;top:590.68px;font-family:'Liberation Sans',sans-serif;font-size:11.3px;color:#000;transform:scaleX(0.8626);transform-origin:0 0;">Events</div>
<svg style="position:absolute;left:0px;top:549px;" width="430" height="14" viewBox="0 549 430 14"><rect x="390.7" y="551.6" width="3.6" height="4.6" fill="#e8e8e8" stroke="#000" stroke-width="1.3"/><rect x="388.9" y="556" width="7" height="1.3" fill="#000"/><rect x="391.8" y="557" width="1.2" height="3.4" fill="#000"/><path d="M406 551.2 L414 559.4 M414 551.2 L406 559.4" stroke="#3a3a3a" stroke-width="1.1" fill="none"/></svg>
<svg style="position:absolute;left:411px;top:576px;" width="10" height="6" viewBox="0 0 10 6"><path d="M0.3 0.4 L5 5.2 L9.7 0.4" fill="none" stroke="#666" stroke-width="1.1"/></svg>
<svg style="position:absolute;left:405px;top:593px;" width="14" height="14" viewBox="0 0 14 14"><circle cx="8.8" cy="5.2" r="4" fill="none" stroke="#2a6cb5" stroke-width="1.8"/><path d="M6 8 L1.2 12.4" stroke="#2a6cb5" stroke-width="2" stroke-linecap="round"/></svg>
<div style="position:absolute;left:0px;top:609.5px;width:409.6px;height:145.7px;background:#fff;"></div>
<div style="position:absolute;left:95.2px;top:609.5px;width:1px;height:145.7px;background:#e0e0e0;"></div>
<div style="position:absolute;left:409.6px;top:609.5px;width:14.7px;height:145.7px;background:#f0f0f0;"></div>
<div style="position:absolute;left:410.2px;top:634.6px;width:12.7px;height:11.6px;background:#dcdcdc;"></div>
<svg style="position:absolute;left:413px;top:615.6px;" width="8" height="4.4" viewBox="0 0 8 4.4"><path d="M0.3 4 L4 0.5 L7.7 4" fill="none" stroke="#888" stroke-width="1.2"/></svg>
<svg style="position:absolute;left:413px;top:743.6px;" width="8" height="4.4" viewBox="0 0 8 4.4"><path d="M0.3 0.4 L4 3.9 L7.7 0.4" fill="none" stroke="#888" stroke-width="1.2"/></svg>
<div class="t" style="left:18.7px;top:608.98px;font-family:'Liberation Sans',sans-serif;font-size:11.3px;color:#111;transform:scaleX(0.9263);transform-origin:0 0;">Anchors</div>
<svg style="position:absolute;left:4.9px;top:615.1px;" width="7" height="9.4" viewBox="0 0 7 9.4"><path d="M0.5 0.4 L5.6 4.7 L0.5 9" fill="none" stroke="#666" stroke-width="1.1"/></svg>
<div class="t" style="left:104.9px;top:608.98px;font-family:'Liberation Sans',sans-serif;font-size:11.3px;color:#22589f;transform:scaleX(0.9198);transform-origin:0 0;">[akLeft,akTop]</div>
<div class="t" style="left:18.7px;top:626.61px;font-family:'Liberation Sans',sans-serif;font-size:11.3px;color:#111;transform:scaleX(0.932);transform-origin:0 0;">AutoScroll</div>
<div style="position:absolute;left:104.5px;top:647.73px;width:0px;height:0px;background:none;"></div>
<div style="position:absolute;left:104.6px;top:629.6px;width:13px;height:13px;background:#fff;border:1.2px solid #333;box-sizing:border-box"></div>
<div class="t" style="left:122.7px;top:626.61px;font-family:'Liberation Sans',sans-serif;font-size:11.3px;color:#22589f;transform:scaleX(0.8145);transform-origin:0 0;">False</div>
<div class="t" style="left:18.7px;top:644.24px;font-family:'Liberation Sans',sans-serif;font-size:11.3px;color:#111;transform:scaleX(0.889);transform-origin:0 0;">AutoSize</div>
<div style="position:absolute;left:104.5px;top:665.36px;width:0px;height:0px;background:none;"></div>
<div style="position:absolute;left:104.6px;top:647.23px;width:13px;height:13px;background:#fff;border:1.2px solid #333;box-sizing:border-box"></div>
<div class="t" style="left:122.7px;top:644.24px;font-family:'Liberation Sans',sans-serif;font-size:11.3px;color:#22589f;transform:scaleX(0.8145);transform-origin:0 0;">False</div>
<div class="t" style="left:18.7px;top:661.87px;font-family:'Liberation Sans',sans-serif;font-size:11.3px;color:#111;transform:scaleX(0.9309);transform-origin:0 0;">BiDiMode</div>
<div class="t" style="left:104.9px;top:661.87px;font-family:'Liberation Sans',sans-serif;font-size:11.3px;color:#22589f;transform:scaleX(0.928);transform-origin:0 0;">bdLeftToRight</div>
<div class="t" style="left:18.7px;top:679.50px;font-family:'Liberation Sans',sans-serif;font-size:11.3px;color:#111;transform:scaleX(0.8979);transform-origin:0 0;">BorderIcons</div>
<svg style="position:absolute;left:4.9px;top:685.62px;" width="7" height="9.4" viewBox="0 0 7 9.4"><path d="M0.5 0.4 L5.6 4.7 L0.5 9" fill="none" stroke="#666" stroke-width="1.1"/></svg>
<div class="t" style="left:104.9px;top:679.50px;font-family:'Liberation Sans',sans-serif;font-size:11.3px;color:#22589f;transform:scaleX(0.9497);transform-origin:0 0;">[biSystemMenu,biMinimize,biMaximize]</div>
<div class="t" style="left:18.7px;top:697.13px;font-family:'Liberation Sans',sans-serif;font-size:11.3px;color:#111;transform:scaleX(0.8877);transform-origin:0 0;">BorderStyle</div>
<div class="t" style="left:104.9px;top:697.13px;font-family:'Liberation Sans',sans-serif;font-size:11.3px;color:#22589f;transform:scaleX(0.8577);transform-origin:0 0;">bsSizeable</div>
<div class="t" style="left:18.7px;top:714.76px;font-family:'Liberation Sans',sans-serif;font-size:11.3px;color:#111;transform:scaleX(0.93);transform-origin:0 0;">BorderWidth</div>
<div class="t" style="left:104.9px;top:714.76px;font-family:'Liberation Sans',sans-serif;font-size:11.3px;color:#22589f;transform:scaleX(0.7782);transform-origin:0 0;">0</div>
<div style="position:absolute;left:0px;top:733.2px;width:95.2px;height:17.6px;background:#ecf1f9;"></div>
<div style="position:absolute;left:95.6px;top:733.2px;width:313.6px;height:17.7px;background:#fff;border:1.1px solid #80b4e8;box-sizing:border-box"></div>
<div class="t" style="left:18.7px;top:732.39px;font-family:'Liberation Sans',sans-serif;font-size:11.3px;color:#111;transform:scaleX(0.9293);transform-origin:0 0;">Caption</div>
<div class="t" style="left:104px;top:732.39px;font-family:'Liberation Sans',sans-serif;font-size:11.3px;color:#000;font-weight:bold;transform:scaleX(0.889);transform-origin:0 0;">Form1</div>
<div style="position:absolute;left:0px;top:761.4px;width:424.3px;height:57.3px;background:#f0f0f0;"></div>
<div style="position:absolute;left:0px;top:797.6px;width:424.3px;height:1.6px;background:#e5e5e5;"></div>
<div class="t" style="left:4.4px;top:761.68px;font-family:'Liberation Sans',sans-serif;font-size:11.3px;color:#111;transform:scaleX(0.8981);transform-origin:0 0;">Quick Edit...</div>
<div class="t" style="left:64.5px;top:761.68px;font-family:'Liberation Sans',sans-serif;font-size:11.3px;color:#111;transform:scaleX(0.9158);transform-origin:0 0;">Quick Edit Icon...</div>
<div class="t" style="left:147.2px;top:761.68px;font-family:'Liberation Sans',sans-serif;font-size:11.3px;color:#111;transform:scaleX(0.9129);transform-origin:0 0;">Bind Visually...</div>
<div class="t" style="left:5.3px;top:799.08px;font-family:'Liberation Sans',sans-serif;font-size:11.3px;color:#111;transform:scaleX(0.9285);transform-origin:0 0;">All shown</div>
<div style="position:absolute;left:431px;top:77.2px;width:536px;height:19.4px;background:#f0f0f0;"></div>
<div class="t" style="left:438.3px;top:77.48px;font-family:'Liberation Sans',sans-serif;font-size:11.3px;color:#111;transform:scaleX(0.9176);transform-origin:0 0;">EncryptVcl.Main</div>
<div style="position:absolute;left:535.5px;top:77.2px;width:87.8px;height:20px;background:#1c60a8;"></div>
<div class="t" style="left:543px;top:77.48px;font-family:'Liberation Sans',sans-serif;font-size:11.3px;color:#fff;transform:scaleX(0.8588);transform-origin:0 0;">CP.Func.AES</div>
<div style="position:absolute;left:431px;top:96.5px;width:536px;height:2.1px;background:#1c60a8;"></div>
<svg style="position:absolute;left:609.2px;top:84.7px;" width="8" height="8" viewBox="0 0 8 8"><path d="M0.3 0.3 L7.7 7.7 M7.7 0.3 L0.3 7.7" stroke="#fff" stroke-width="1.1" fill="none"/></svg>
<div style="position:absolute;left:431px;top:98.6px;width:536px;height:21.4px;background:#fafbfd;"></div>
<div style="position:absolute;left:431px;top:120px;width:536px;height:2.6px;background:#f1f1f1;"></div>
<div style="position:absolute;left:431px;top:98.6px;width:74px;height:22.4px;background:#f0f0f0;"></div>
<div style="position:absolute;left:881px;top:100.5px;width:17px;height:17px;background:#f0f0f0;"></div>
<svg style="position:absolute;left:0px;top:98px;" width="967" height="24" viewBox="0 98 967 24"><rect x="437.8" y="102.1" width="13.1" height="12.1" fill="#8fb0dc"/><rect x="437.8" y="102.1" width="5.8" height="3.8" fill="#2f6eb5"/><rect x="445.1" y="102.1" width="5.8" height="3.8" fill="#2f6eb5"/><rect x="437.8" y="107.8" width="13.1" height="6.4" fill="#2f6eb5"/><rect x="436.6" y="110.6" width="7.2" height="5.4" fill="#f0f0f0"/><path d="M437 113.4 H443 M440.6 110.8 L443.4 113.4 L440.6 116" fill="none" stroke="#36a06c" stroke-width="1.5"/><path d="M459 107.2 l3 3.2 l3 -3.2 M495 107.2 l3 3.2 l3 -3.2" fill="none" stroke="#888" stroke-width="1.1"/><path d="M475.2 109.4 V102.4 H481.6 L484.4 105 V109.4" fill="#fafafa" stroke="#6a6a6a" stroke-width="1.1"/><path d="M481.4 102.6 V105.2 H484.2 M477.4 105 H479.6 M477.4 107 H482.4" fill="none" stroke="#aaa" stroke-width="0.8"/><rect x="473.4" y="109.6" width="13.2" height="3.8" rx="0.6" fill="#e6e8f2" stroke="#d8402e" stroke-width="1.2"/><path d="M476.4 111.5 H483.6" stroke="#8a8a8a" stroke-width="1"/><path d="M475.2 114 V115.8 H484.6 V114" fill="none" stroke="#4a4a4a" stroke-width="1.1"/><path d="M885.4 107.4 L890 112.4 L894.6 107.4" fill="none" stroke="#8a8a8a" stroke-width="1.1"/></svg>
<div style="position:absolute;left:431px;top:122.6px;width:536px;height:660.2px;background:#fff;"></div>
<div style="position:absolute;left:501px;top:122.6px;width:1px;height:660.2px;background:#a4a4d8;"></div>
<div style="position:absolute;left:431px;top:782.8px;width:536px;height:14.4px;background:#f0f0f0;"></div>
<div style="position:absolute;left:447px;top:783.2px;width:50px;height:13.4px;background:#dadada;"></div>
<svg style="position:absolute;left:436px;top:785px;" width="6" height="10" viewBox="0 0 6 10"><path d="M5 0.8 L1 4.8 L5 8.8" fill="none" stroke="#777" stroke-width="1.1"/></svg>
<div style="position:absolute;left:431px;top:797.2px;width:536px;height:21.6px;background:#f0f0f0;"></div>
<div style="position:absolute;left:496.5px;top:798.5px;width:1px;height:20.3px;background:#fafafa;"></div>
<div style="position:absolute;left:495.5px;top:798.5px;width:1px;height:20.3px;background:#e2e2e2;"></div>
<div style="position:absolute;left:571.0px;top:798.5px;width:1px;height:20.3px;background:#fafafa;"></div>
<div style="position:absolute;left:570.0px;top:798.5px;width:1px;height:20.3px;background:#e2e2e2;"></div>
<div style="position:absolute;left:659.1px;top:798.5px;width:1px;height:20.3px;background:#fafafa;"></div>
<div style="position:absolute;left:658.1px;top:798.5px;width:1px;height:20.3px;background:#e2e2e2;"></div>
<div style="position:absolute;left:726.0px;top:798.5px;width:1px;height:20.3px;background:#fafafa;"></div>
<div style="position:absolute;left:725.0px;top:798.5px;width:1px;height:20.3px;background:#e2e2e2;"></div>
<div style="position:absolute;left:795.8px;top:798.5px;width:1px;height:20.3px;background:#fafafa;"></div>
<div style="position:absolute;left:794.8px;top:798.5px;width:1px;height:20.3px;background:#e2e2e2;"></div>
<div style="position:absolute;left:902.1px;top:798.5px;width:1px;height:20.3px;background:#fafafa;"></div>
<div style="position:absolute;left:901.1px;top:798.5px;width:1px;height:20.3px;background:#e2e2e2;"></div>
<svg style="position:absolute;left:0px;top:797px;" width="967" height="22" viewBox="0 797 967 22"><path d="M436.4 802.6 L446.4 808.6 L436.4 814.6 Z" fill="#6e6e6e"/><circle cx="458.7" cy="808.8" r="4.7" fill="#d2452f"/><rect x="471.4" y="804" width="9.4" height="9.4" fill="#6e6e6e"/><path d="M648 806.4 h7.4 l-3.7 4.4 Z" fill="#222"/><rect x="644.0" y="802.6" width="1" height="12.4" fill="#777"/><path d="M785 806.4 h7.4 l-3.7 4.4 Z" fill="#222"/><rect x="780.5" y="802.6" width="1" height="12.4" fill="#777"/><path d="M890 806.4 h7.4 l-3.7 4.4 Z" fill="#222"/><rect x="886.0" y="802.6" width="1" height="12.4" fill="#777"/><rect x="911" y="807.6" width="10" height="2.2" fill="#48a57c"/><rect x="932" y="808.4" width="36" height="1" fill="#555"/><rect x="949" y="802.6" width="6" height="13.4" fill="#2f6eb5"/></svg>
<div class="t" style="left:527px;top:799.08px;font-family:'Liberation Sans',sans-serif;font-size:11.3px;color:#111;transform:scaleX(0.9623);transform-origin:0 0;">32:  9</div>
<div class="t" style="left:597px;top:799.08px;font-family:'Liberation Sans',sans-serif;font-size:11.3px;color:#111;transform:scaleX(0.8986);transform-origin:0 0;">Insert</div>
<div class="t" style="left:740.4px;top:799.08px;font-family:'Liberation Sans',sans-serif;font-size:11.3px;color:#111;transform:scaleX(0.9366);transform-origin:0 0;">Delphi</div>
<div class="t" style="left:831.4px;top:799.08px;font-family:'Liberation Sans',sans-serif;font-size:11.3px;color:#111;transform:scaleX(0.8796);transform-origin:0 0;">ANSI</div>
<div style="position:absolute;left:431px;top:122.6px;width:536px;height:659.9px;overflow:hidden">
<div style="position:absolute;left:77.19999999999999px;top:418.5999999999999px;width:470px;height:16.7px;background:#fafbe6;"></div>
<div style="position:absolute;left:55.5px;top:9.100000000000017px;width:2px;height:2px;background:#9ba3cf;"></div>
<div style="position:absolute;left:55.5px;top:25.100000000000016px;width:2px;height:2px;background:#9ba3cf;"></div>
<div class="t" style="left:77.30000000000001px;top:17.18px;font-family:'Liberation Mono',monospace;font-size:13.24px;color:#0a0a0a;-webkit-text-stroke:0.25px;"><b style="color:#000080">type</b></div>
<div style="position:absolute;left:55.5px;top:42.100000000000016px;width:2px;height:2px;background:#9ba3cf;"></div>
<div class="t" style="left:77.30000000000001px;top:34.18px;font-family:'Liberation Mono',monospace;font-size:13.24px;color:#0a0a0a;-webkit-text-stroke:0.25px;">  TAESSuccessBinProc = reference <b style="color:#000080">to</b> <b style="color:#000080">procedure</b>(<b style="color:#000080">const</b> ABytes: TBytes);</div>
<div class="t" style="left:44.53999999999998px;top:51.18px;font-family:'Liberation Mono',monospace;font-size:13.24px;color:#a3abd3;">10</div>
<div class="t" style="left:77.30000000000001px;top:51.18px;font-family:'Liberation Mono',monospace;font-size:13.24px;color:#0a0a0a;-webkit-text-stroke:0.25px;">  TAESSuccessProc = reference <b style="color:#000080">to</b> <b style="color:#000080">procedure</b>(<b style="color:#000080">const</b> AData: <b style="color:#000080">string</b>);</div>
<div style="position:absolute;left:55.5px;top:76.10000000000002px;width:2px;height:2px;background:#9ba3cf;"></div>
<div style="position:absolute;left:55.5px;top:92.10000000000002px;width:2px;height:2px;background:#9ba3cf;"></div>
<div class="t" style="left:77.30000000000001px;top:84.18px;font-family:'Liberation Mono',monospace;font-size:13.24px;color:#0a0a0a;-webkit-text-stroke:0.25px;">  TAESFunc = <b style="color:#000080">record</b></div>
<div style="position:absolute;left:55.5px;top:109.10000000000002px;width:2px;height:2px;background:#9ba3cf;"></div>
<div class="t" style="left:77.30000000000001px;top:101.18px;font-family:'Liberation Mono',monospace;font-size:13.24px;color:#0a0a0a;-webkit-text-stroke:0.25px;">  <b style="color:#000080">strict</b> <b style="color:#000080">private</b> <b style="color:#000080">const</b></div>
<div style="position:absolute;left:55.5px;top:126.10000000000002px;width:2px;height:2px;background:#9ba3cf;"></div>
<div class="t" style="left:77.30000000000001px;top:118.18px;font-family:'Liberation Mono',monospace;font-size:13.24px;color:#0a0a0a;-webkit-text-stroke:0.25px;">    cBlockMinSize = <span style="color:#1a30e0">16</span>;</div>
<div style="position:absolute;left:54px;top:142.4px;width:4.8px;height:1px;background:#a3abd3;"></div>
<div class="t" style="left:77.30000000000001px;top:134.18px;font-family:'Liberation Mono',monospace;font-size:13.24px;color:#0a0a0a;-webkit-text-stroke:0.25px;">    cSuffix = <span style="color:#1a30e0">' b'</span>;</div>
<div style="position:absolute;left:55.5px;top:159.10000000000002px;width:2px;height:2px;background:#9ba3cf;"></div>
<div class="t" style="left:77.30000000000001px;top:151.18px;font-family:'Liberation Mono',monospace;font-size:13.24px;color:#0a0a0a;-webkit-text-stroke:0.25px;">  <b style="color:#000080">strict</b> <b style="color:#000080">private</b></div>
<div style="position:absolute;left:55.5px;top:176.10000000000002px;width:2px;height:2px;background:#9ba3cf;"></div>
<div class="t" style="left:77.30000000000001px;top:168.18px;font-family:'Liberation Mono',monospace;font-size:13.24px;color:#0a0a0a;-webkit-text-stroke:0.25px;">    <b style="color:#000080">class</b> <b style="color:#000080">function</b> CalculateKey(<b style="color:#000080">const</b> AKey: <b style="color:#000080">string</b>): <b style="color:#000080">string</b>; static;</div>
<div style="position:absolute;left:55.5px;top:193.10000000000002px;width:2px;height:2px;background:#9ba3cf;"></div>
<div class="t" style="left:77.30000000000001px;top:185.18px;font-family:'Liberation Mono',monospace;font-size:13.24px;color:#0a0a0a;-webkit-text-stroke:0.25px;"><span style="color:#2b9292">{$IFDEF WEBLIB}</span><b style="color:#000080">class</b> <b style="color:#000080">function</b> CalculateKeyWeb(<b style="color:#000080">const</b> AKey: <b style="color:#000080">string</b>): TBytes;</div>
<div style="position:absolute;left:55.5px;top:209.10000000000002px;width:2px;height:2px;background:#9ba3cf;"></div>
<div class="t" style="left:77.30000000000001px;top:201.18px;font-family:'Liberation Mono',monospace;font-size:13.24px;color:#0a0a0a;-webkit-text-stroke:0.25px;">  <b style="color:#000080">public</b></div>
<div class="t" style="left:44.53999999999998px;top:218.18px;font-family:'Liberation Mono',monospace;font-size:13.24px;color:#a3abd3;">20</div>
<div class="t" style="left:77.30000000000001px;top:218.18px;font-family:'Liberation Mono',monospace;font-size:13.24px;color:#0a0a0a;-webkit-text-stroke:0.25px;"><span style="color:#2b9292">{$IFNDEF WEBLIB}</span><b style="color:#000080">class</b> <b style="color:#000080">function</b> Decrypt(<b style="color:#000080">const</b> AKey: <b style="color:#000080">string</b>; <b style="color:#000080">const</b> AValue</div>
<div style="position:absolute;left:55.5px;top:243.10000000000002px;width:2px;height:2px;background:#9ba3cf;"></div>
<div class="t" style="left:77.30000000000001px;top:235.18px;font-family:'Liberation Mono',monospace;font-size:13.24px;color:#0a0a0a;-webkit-text-stroke:0.25px;"><span style="color:#2b9292">{$IFDEF WEBLIB}</span><b style="color:#000080">class</b> <b style="color:#000080">procedure</b> Decrypt(<b style="color:#000080">const</b> AKey: <b style="color:#000080">string</b>; <b style="color:#000080">const</b> AValue</div>
<div style="position:absolute;left:55.5px;top:260.1px;width:2px;height:2px;background:#9ba3cf;"></div>
<div class="t" style="left:77.30000000000001px;top:252.18px;font-family:'Liberation Mono',monospace;font-size:13.24px;color:#0a0a0a;-webkit-text-stroke:0.25px;"><span style="color:#2b9292">{$IFNDEF WEBLIB}</span><b style="color:#000080">class</b> <b style="color:#000080">function</b> Encrypt(<b style="color:#000080">const</b> AKey, AValue: <b style="color:#000080">string</b>): <b style="color:#000080">string</b>;</div>
<div style="position:absolute;left:55.5px;top:276.1px;width:2px;height:2px;background:#9ba3cf;"></div>
<div class="t" style="left:77.30000000000001px;top:268.18px;font-family:'Liberation Mono',monospace;font-size:13.24px;color:#0a0a0a;-webkit-text-stroke:0.25px;"><span style="color:#2b9292">{$IFDEF WEBLIB}</span><b style="color:#000080">class</b> <b style="color:#000080">procedure</b> Encrypt(<b style="color:#000080">const</b> AKey: <b style="color:#000080">string</b>; <b style="color:#000080">const</b> AValue</div>
<div style="position:absolute;left:55.5px;top:293.1px;width:2px;height:2px;background:#9ba3cf;"></div>
<div class="t" style="left:77.30000000000001px;top:285.18px;font-family:'Liberation Mono',monospace;font-size:13.24px;color:#0a0a0a;-webkit-text-stroke:0.25px;">  <b style="color:#000080">end;</b></div>
<div style="position:absolute;left:54px;top:310.40000000000003px;width:4.8px;height:1px;background:#a3abd3;"></div>
<div style="position:absolute;left:55.5px;top:326.1px;width:2px;height:2px;background:#9ba3cf;"></div>
<div class="t" style="left:77.30000000000001px;top:318.18px;font-family:'Liberation Mono',monospace;font-size:13.24px;color:#0a0a0a;-webkit-text-stroke:0.25px;"><b style="color:#000080">implementation</b></div>
<div style="position:absolute;left:55.5px;top:343.1px;width:2px;height:2px;background:#9ba3cf;"></div>
<div style="position:absolute;left:55.5px;top:360.1px;width:2px;height:2px;background:#9ba3cf;"></div>
<div class="t" style="left:77.30000000000001px;top:352.18px;font-family:'Liberation Mono',monospace;font-size:13.24px;color:#0a0a0a;-webkit-text-stroke:0.25px;"><b style="color:#000080">uses</b></div>
<div style="position:absolute;left:55.5px;top:377.1px;width:2px;height:2px;background:#9ba3cf;"></div>
<div class="t" style="left:77.30000000000001px;top:369.18px;font-family:'Liberation Mono',monospace;font-size:13.24px;color:#0a0a0a;-webkit-text-stroke:0.25px;"><span style="color:#2b9292">{$IFDEF WEBLIB}</span></div>
<div class="t" style="left:44.53999999999998px;top:385.18px;font-family:'Liberation Mono',monospace;font-size:13.24px;color:#a3abd3;">30</div>
<div class="t" style="left:77.30000000000001px;top:385.18px;font-family:'Liberation Mono',monospace;font-size:13.24px;color:#0a0a0a;-webkit-text-stroke:0.25px;">  WEBLib.Crypto, Web, JS, Bcl.Utils,</div>
<div style="position:absolute;left:55.5px;top:410.0999999999999px;width:2px;height:2px;background:#9ba3cf;"></div>
<div class="t" style="left:77.30000000000001px;top:402.18px;font-family:'Liberation Mono',monospace;font-size:13.24px;color:#0a0a0a;-webkit-text-stroke:0.25px;"><span style="color:#2b9292">{$ELSE}</span></div>
<div class="t" style="left:44.53999999999998px;top:419.18px;font-family:'Liberation Mono',monospace;font-size:13.24px;color:#a3abd3;">32</div>
<div class="t" style="left:77.30000000000001px;top:419.18px;font-family:'Liberation Mono',monospace;font-size:13.24px;color:#0a0a0a;-webkit-text-stroke:0.25px;">  MiscObj, AESObj,</div>
<div style="position:absolute;left:55.5px;top:443.0999999999999px;width:2px;height:2px;background:#9ba3cf;"></div>
<div class="t" style="left:77.30000000000001px;top:435.18px;font-family:'Liberation Mono',monospace;font-size:13.24px;color:#0a0a0a;-webkit-text-stroke:0.25px;"><span style="color:#2b9292">{$ENDIF}</span></div>
<div style="position:absolute;left:55.5px;top:460.0999999999999px;width:2px;height:2px;background:#9ba3cf;"></div>
<div class="t" style="left:77.30000000000001px;top:452.18px;font-family:'Liberation Mono',monospace;font-size:13.24px;color:#0a0a0a;-webkit-text-stroke:0.25px;">  System.Classes, CP.Func.AES.Keys;</div>
<div style="position:absolute;left:54px;top:477.3999999999999px;width:4.8px;height:1px;background:#a3abd3;"></div>
<div style="position:absolute;left:55.5px;top:494.0999999999999px;width:2px;height:2px;background:#9ba3cf;"></div>
<div class="t" style="left:77.30000000000001px;top:486.18px;font-family:'Liberation Mono',monospace;font-size:13.24px;color:#0a0a0a;-webkit-text-stroke:0.25px;"><span style="color:#2b9292">{$IFDEF WEBLIB}</span></div>
<div style="position:absolute;left:55.5px;top:510.0999999999999px;width:2px;height:2px;background:#9ba3cf;"></div>
<div class="t" style="left:77.30000000000001px;top:502.18px;font-family:'Liberation Mono',monospace;font-size:13.24px;color:#0a0a0a;-webkit-text-stroke:0.25px;"><b style="color:#000080">type</b></div>
<div style="position:absolute;left:55.5px;top:527.0999999999999px;width:2px;height:2px;background:#9ba3cf;"></div>
<div class="t" style="left:77.30000000000001px;top:519.18px;font-family:'Liberation Mono',monospace;font-size:13.24px;color:#0a0a0a;-webkit-text-stroke:0.25px;">  TAESEvents = <b style="color:#000080">class</b>(TObject)</div>
<div style="position:absolute;left:55.5px;top:544.0999999999999px;width:2px;height:2px;background:#9ba3cf;"></div>
<div class="t" style="left:77.30000000000001px;top:536.18px;font-family:'Liberation Mono',monospace;font-size:13.24px;color:#0a0a0a;-webkit-text-stroke:0.25px;">  <b style="color:#000080">strict</b> <b style="color:#000080">private</b></div>
<div class="t" style="left:44.53999999999998px;top:552.18px;font-family:'Liberation Mono',monospace;font-size:13.24px;color:#a3abd3;">40</div>
<div class="t" style="left:77.30000000000001px;top:552.18px;font-family:'Liberation Mono',monospace;font-size:13.24px;color:#0a0a0a;-webkit-text-stroke:0.25px;">    FAES: TAESEncryption;</div>
<div style="position:absolute;left:55.5px;top:577.0999999999999px;width:2px;height:2px;background:#9ba3cf;"></div>
<div class="t" style="left:77.30000000000001px;top:569.18px;font-family:'Liberation Mono',monospace;font-size:13.24px;color:#0a0a0a;-webkit-text-stroke:0.25px;">    FData: TJSArrayBuffer;</div>
<div style="position:absolute;left:55.5px;top:594.0999999999999px;width:2px;height:2px;background:#9ba3cf;"></div>
<div class="t" style="left:77.30000000000001px;top:586.18px;font-family:'Liberation Mono',monospace;font-size:13.24px;color:#0a0a0a;-webkit-text-stroke:0.25px;">    FEncrypted: TAESSuccessBinProc;</div>
<div style="position:absolute;left:55.5px;top:611.0999999999999px;width:2px;height:2px;background:#9ba3cf;"></div>
<div class="t" style="left:77.30000000000001px;top:603.18px;font-family:'Liberation Mono',monospace;font-size:13.24px;color:#0a0a0a;-webkit-text-stroke:0.25px;">    FError: TProcString;</div>
<div style="position:absolute;left:55.5px;top:627.0999999999999px;width:2px;height:2px;background:#9ba3cf;"></div>
<div class="t" style="left:77.30000000000001px;top:619.18px;font-family:'Liberation Mono',monospace;font-size:13.24px;color:#0a0a0a;-webkit-text-stroke:0.25px;">    FKey: <b style="color:#000080">string</b>;</div>
<div style="position:absolute;left:54px;top:644.4px;width:4.8px;height:1px;background:#a3abd3;"></div>
<div class="t" style="left:77.30000000000001px;top:636.18px;font-family:'Liberation Mono',monospace;font-size:13.24px;color:#0a0a0a;-webkit-text-stroke:0.25px;">    FDecrypted: TAESSuccessProc;</div>
<div style="position:absolute;left:55.5px;top:661.0999999999999px;width:2px;height:2px;background:#9ba3cf;"></div>
<div class="t" style="left:77.30000000000001px;top:653.18px;font-family:'Liberation Mono',monospace;font-size:13.24px;color:#0a0a0a;-webkit-text-stroke:0.25px;">    FValue: <b style="color:#000080">string</b>;</div>
<div style="position:absolute;left:66.5px;top:88.90000000000002px;width:8.2px;height:8.2px;background:#fff;border:1px solid #b4b4dc;box-sizing:border-box"></div>
<div style="position:absolute;left:68.5px;top:92.50000000000001px;width:4.2px;height:1px;background:#9a9ac8;"></div>
<div style="position:absolute;left:66.5px;top:322.90000000000003px;width:8.2px;height:8.2px;background:#fff;border:1px solid #b4b4dc;box-sizing:border-box"></div>
<div style="position:absolute;left:68.5px;top:326.50000000000006px;width:4.2px;height:1px;background:#9a9ac8;"></div>
<div style="position:absolute;left:70.5px;top:295.70000000000005px;width:4.2px;height:1px;background:#a4a4d8;"></div>
<svg style="position:absolute;left:17.900000000000034px;top:422.99999999999994px;" width="10.8" height="10.8" viewBox="0 0 10.8 10.8"><circle cx="5.4" cy="5.4" r="5.4" fill="#c9452f"/><rect x="4.6" y="2.2" width="1.6" height="4.3" fill="#fff"/><rect x="4.6" y="7.4" width="1.6" height="1.5" fill="#fff"/></svg>
<svg style="position:absolute;left:93px;top:432.5999999999999px;" width="56" height="3" viewBox="0 0 56 3"><path d="M0 1.6 L2 0.2 L4 1.6 L6 0.2 L8 1.6 L10 0.2 L12 1.6 L14 0.2 L16 1.6 L18 0.2 L20 1.6 L22 0.2 L24 1.6 L26 0.2 L28 1.6 L30 0.2 L32 1.6 L34 0.2 L36 1.6 L38 0.2 L40 1.6 L42 0.2 L44 1.6 L46 0.2 L48 1.6 L50 0.2 L52 1.6 L54 0.2 L56 1.6" fill="none" stroke="#e8485c" stroke-width="1.1"/></svg>
</div>
<div class="t" style="left:1.5px;top:829.15px;font-family:'Liberation Sans',sans-serif;font-size:14px;color:#111;transform:scaleX(0.9167);transform-origin:0 0;">Messages</div>
<div style="position:absolute;left:0px;top:850.6px;width:967px;height:174px;background:#fff;"></div>
<div style="position:absolute;left:0px;top:902.9px;width:967px;height:17.8px;background:#eff2fa;"></div>
<div class="t" style="left:15.1px;top:849.08px;font-family:'Liberation Sans',sans-serif;font-size:11.3px;color:#000;font-weight:bold;transform:scaleX(0.8967);transform-origin:0 0;">Checking project dependencies...</div>
<div class="t" style="left:15.1px;top:866.63px;font-family:'Liberation Sans',sans-serif;font-size:11.3px;color:#000;font-weight:bold;transform:scaleX(0.8847);transform-origin:0 0;">Compiling AESEncryptVcl.dproj (Debug, Win32)</div>
<div class="t" style="left:15.1px;top:884.18px;font-family:'Liberation Sans',sans-serif;font-size:11.3px;color:#111;transform:scaleX(0.9205);transform-origin:0 0;">dcc32 command line for "AESEncryptVcl.dpr"</div>
<div class="t" style="left:15.1px;top:901.73px;font-family:'Liberation Sans',sans-serif;font-size:11.3px;color:#111;transform:scaleX(0.9018);transform-origin:0 0;">[dcc32 Fatal Error] CP.Func.AES.pas(32): F2613 Unit 'MiscObj' not found.</div>
<div class="t" style="left:15.1px;top:919.28px;font-family:'Liberation Sans',sans-serif;font-size:11.3px;color:#000;font-weight:bold;transform:scaleX(0.8482);transform-origin:0 0;">Failed</div>
<div class="t" style="left:15.1px;top:936.83px;font-family:'Liberation Sans',sans-serif;font-size:11.3px;color:#111;transform:scaleX(0.8697);transform-origin:0 0;">Elapsed time: 00:00:00.4</div>
<svg style="position:absolute;left:1px;top:890.5px;" width="8" height="10" viewBox="0 0 8 10"><path d="M0.5 0.4 L6.4 4.8 L0.5 9.2" fill="none" stroke="#666" stroke-width="1.1"/></svg>
</body></html>
